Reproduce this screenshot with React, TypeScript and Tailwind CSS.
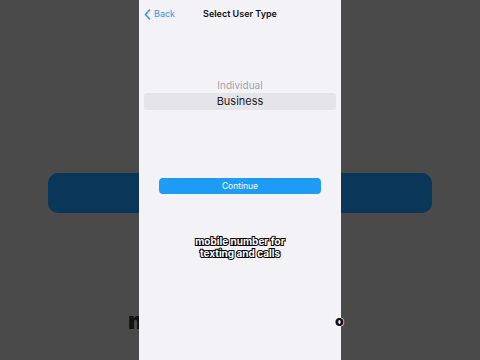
import React from 'react';

const captionStyle: React.CSSProperties = {
  WebkitTextStroke: '2px #000',
  paintOrder: 'stroke fill',
};

const App: React.FC = () => {
  return (
    <div className="relative w-[480px] h-[360px] overflow-hidden bg-[#4a4a4b] font-['Inter','Liberation_Sans',sans-serif]">
      {/* blurred background content behind the phone */}
      <div className="absolute left-[48px] top-[173px] w-[384px] h-[40px] rounded-[10px] bg-[#0a3659]"></div>
      <span className="absolute left-[128px] top-[309px] text-[24px] font-black leading-none text-[#111]">m</span>

      {/* phone screen */}
      <div className="relative z-10 mx-auto w-[202px] h-full bg-[#f2f2f7] flex flex-col">
        {/* nav bar */}
        <div className="relative h-[27px] pt-[1px] flex items-center">
          <div className="flex items-center pl-[5px] gap-[3px]">
            <svg width="7" height="11" viewBox="0 0 7 11" fill="none">
              <path d="M5.5 1 L1.5 5.5 L5.5 10" stroke="#3b8ef0" strokeWidth="1.6" strokeLinecap="round" strokeLinejoin="round" />
            </svg>
            <span className="text-[9px] text-[#3b8ef0]">Back</span>
          </div>
          <span className="absolute left-0 right-0 text-center text-[9px] font-semibold text-[#111]">Select User Type</span>
        </div>

        {/* picker */}
        <div className="mt-[51px] flex flex-col items-center">
          <span className="text-[10px] leading-[14px] text-[#a3a3a8]">Individual</span>
          <div className="mt-[1px] w-[192px] h-[17px] rounded-[3px] bg-[#e4e4e9] flex items-center justify-center">
            <span className="text-[11px] text-[#1c1c1e]">Business</span>
          </div>
        </div>

        {/* continue */}
        <div className="mt-[68px] flex justify-center">
          <button className="w-[162px] h-[16px] rounded-[4px] bg-[#1d9bf5] text-white text-[8.5px] flex items-center justify-center">
            Continue
          </button>
        </div>

        {/* caption */}
        <div className="mt-[41px] flex flex-col items-center text-white font-bold text-[10px] leading-[12px]" style={captionStyle}>
          <span>mobile number for</span>
          <span>texting and calls</span>
        </div>
      </div>
      <span className="absolute z-20 left-[335px] top-[314px] text-[14px] font-black leading-none text-[#111]" style={{ WebkitTextStroke: '1px #fff', paintOrder: 'stroke fill' }}>o</span>
    </div>
  );
};

export default App;
